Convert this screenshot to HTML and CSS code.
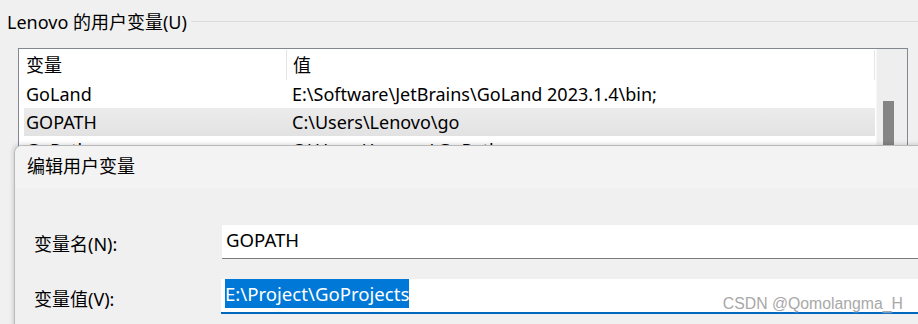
FILE: index.html
```html
<!DOCTYPE html>
<html lang="zh-CN">
<head>
    <meta charset="UTF-8">
    <title>编辑用户变量</title>
    <link rel="stylesheet" href="styles.css">
</head>
<body>
    <div class="group-head">
        <span class="group-title">Lenovo 的用户变量(U)</span>
        <span class="group-line"></span>
    </div>

    <div class="listbox">
        <div class="list">
            <div class="row head">
                <div class="col-name">变量</div>
                <div class="col-value">值</div>
            </div>
            <div class="row">
                <div class="col-name">GoLand</div>
                <div class="col-value">E:\Software\JetBrains\GoLand 2023.1.4\bin;</div>
            </div>
            <div class="row selected">
                <div class="col-name">GOPATH</div>
                <div class="col-value">C:\Users\Lenovo\go</div>
            </div>
            <div class="row">
                <div class="col-name">GoPath</div>
                <div class="col-value">C:\Users\Lenovo\GoPath</div>
            </div>
        </div>
        <div class="scrollbar">
            <div class="thumb"></div>
        </div>
    </div>

    <div class="dialog">
        <div class="dialog-title">编辑用户变量</div>
        <div class="dialog-body">
            <label class="field-label">变量名(N):</label>
            <div class="field">GOPATH</div>
            <label class="field-label">变量值(V):</label>
            <div class="field active"><span class="sel">E:\Project\GoProjects</span></div>
        </div>
    </div>

    <div class="watermark">CSDN @Qomolangma_H</div>
</body>
</html>
```

FILE: styles.css
```css
body {
    margin: 0;
    background: #f0f0f0;
    font-family: "Noto Sans", "Noto Sans CJK SC", sans-serif;
    font-size: 18px;
    color: #000;
    width: 918px;
    height: 324px;
    overflow: hidden;
    position: relative;
}
.group-head {
    display: flex;
    align-items: center;
    height: 26px;
    padding: 8px 0 0 7px;
}
.group-title {
    white-space: nowrap;
    padding-right: 4px;
}
.group-line {
    flex: 1;
    border-top: 1px solid #dcdcdc;
    margin-top: 1px;
}
.listbox {
    display: flex;
    margin: 14px 0 0 18px;
    width: 888px;
    height: 97px;
    border: 1px solid #828790;
    border-bottom: none;
    background: #fff;
    overflow: hidden;
}
.list {
    width: 862px;
    overflow: hidden;
}
.row {
    display: flex;
    height: 28px;
    align-items: center;
    white-space: nowrap;
    margin-left: 5px;
}
.row.head {
    height: 31px;
    margin-left: 0;
    padding-left: 5px;
}
.row.head .col-name,
.row.head .col-value {
    border-right: 1px solid #e5e5e5;
    height: 30px;
    line-height: 30px;
}
.row.selected {
    background: linear-gradient(#ececec, #e2e2e2);
}
.col-name {
    width: 260px;
    padding-left: 2px;
}
.col-value {
    flex: 1;
    padding-left: 6px;
}
.scrollbar {
    width: 24px;
    margin-left: 1px;
    background: #eeeeee;
    border-left: 1px solid #f7f7f7;
    padding: 52px 0 0 6px;
}
.thumb {
    width: 11px;
    height: 80px;
    background: #858585;
}
.dialog {
    position: absolute;
    left: 14px;
    top: 145px;
    width: 930px;
    height: 200px;
    border: 1px solid #b9b9b9;
    border-radius: 8px 0 0 0;
    background: #f0f0f0;
    box-shadow: -1px -1px 4px rgba(0, 0, 0, 0.15);
    overflow: hidden;
}
.dialog-title {
    height: 42px;
    line-height: 40px;
    padding-left: 12px;
    background: #f3f3f3;
}
.dialog-body {
    display: grid;
    grid-template-columns: 188px 1fr;
    row-gap: 20px;
    padding: 37px 0 0 19px;
    align-items: center;
}
.field-label {
    white-space: nowrap;
    padding-top: 2px;
}
.field {
    height: 33px;
    line-height: 30px;
    padding-left: 4px;
    background: #fff;
    border-bottom: 1px solid #7a7a7a;
    font-size: 18.6px;
}
.field.active {
    height: 33px;
    border-bottom: 2px solid #0067c0;
    margin-left: -1px;
}
.sel {
    background: #0078d7;
    color: #fff;
    padding: 2px 0;
}
.watermark {
    position: absolute;
    right: 15px;
    top: 295px;
    font-family: "Liberation Sans", Arial, sans-serif;
    font-size: 15.8px;
    color: #a8a8a8;
    text-shadow: 0 0 2px #fff;
}
```
